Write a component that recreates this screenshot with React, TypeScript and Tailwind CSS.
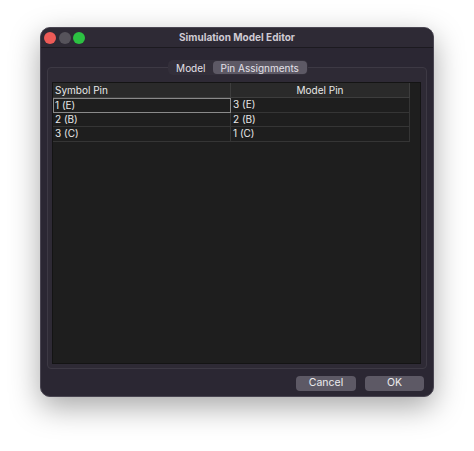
import { useState } from "react";

export default function App() {
  const rows = [
    { symbol: "1 (E)", model: "3 (E)" },
    { symbol: "2 (B)", model: "2 (B)" },
    { symbol: "3 (C)", model: "1 (C)" },
  ];

  const [tab, setTab] = useState("pins");

  return (
    <div
      className="w-[474px] h-[451px] bg-white pl-[40px] pt-[27px]"
      style={{ fontFamily: "Inter, 'Liberation Sans', sans-serif" }}
    >
      <div className="w-[394px] h-[370px] rounded-[10px] bg-[#2b2733] border border-[#4a4652] shadow-[0_10px_30px_rgba(0,0,0,0.35)] flex flex-col overflow-hidden">
        {/* title bar */}
        <div className="h-[20px] shrink-0 relative flex items-center justify-center border-b border-[#1c1a20] bg-[#2e2a35]">
          <div className="absolute left-[3px] top-[4px] flex gap-[2.5px]">
            <span className="w-[12px] h-[12px] rounded-full bg-[#ed5b57]" />
            <span className="w-[12px] h-[12px] rounded-full bg-[#56535b]" />
            <span className="w-[12px] h-[12px] rounded-full bg-[#2cc142]" />
          </div>
          <span className="text-[10px] font-bold text-[#cfcbd3]">Simulation Model Editor</span>
        </div>

        <div className="flex-1 flex flex-col px-[6px] pt-[12px]">
          {/* segmented control */}
          <div className="relative z-10 flex justify-center pl-[2px]">
            <div className="h-[15px] flex items-center rounded-[5px] bg-[#332f3a] px-[1px] text-[10px] text-[#e4e1e8]">
              <button
                onClick={() => setTab("model")}
                className={
                  tab === "model"
                    ? "h-[13px] px-[7px] rounded-[4px] bg-[#5d5965] leading-none"
                    : "h-[13px] px-[7px] rounded-[4px] leading-none"
                }
              >
                Model
              </button>
              <button
                onClick={() => setTab("pins")}
                className={
                  tab === "pins"
                    ? "h-[13px] px-[8px] rounded-[4px] bg-[#5d5965] leading-none"
                    : "h-[13px] px-[8px] rounded-[4px] leading-none"
                }
              >
                Pin Assignments
              </button>
            </div>
          </div>

          {/* tab box */}
          <div className="-mt-[8px] h-[302px] rounded-[4px] border border-[#3d3944] bg-[#2e2a35] pt-[14px] pl-[4px] pr-[5px] pb-[4px] flex flex-col">
            <div className="flex-1 bg-[#1e1e1e] border border-[#141414] text-[10px] text-[#e8e8e8]">
              <div className="flex h-[15px] bg-[#2a2a2a]">
                <div className="w-[178px] border-r border-b border-[#3d3d3d] pl-[2px] flex items-center">Symbol Pin</div>
                <div className="w-[179px] border-r border-b border-[#3d3d3d] flex items-center justify-center">Model Pin</div>
                <div className="flex-1 bg-[#1e1e1e]" />
              </div>
              {rows.map((r, idx) => (
                <div key={r.symbol + idx} className="flex h-[14.5px]">
                  <div
                    className={
                      idx === 0
                        ? "w-[178px] border border-[#8a8a8a] pl-[1px] flex items-center"
                        : "w-[178px] border-r border-b border-[#353535] pl-[2px] flex items-center"
                    }
                  >
                    {r.symbol}
                  </div>
                  <div className="w-[179px] border-r border-b border-[#353535] pl-[2px] flex items-center">
                    {r.model}
                  </div>
                </div>
              ))}
            </div>
          </div>

          {/* buttons */}
          <div className="flex justify-end gap-[9px] pt-[7px] pr-[3px]">
            <button className="w-[60px] h-[15px] rounded-[4px] bg-[#5d5965] text-[10.5px] text-[#ecebee] leading-none">
              Cancel
            </button>
            <button className="w-[59px] h-[15px] rounded-[4px] bg-[#5d5965] text-[10.5px] text-[#ecebee] leading-none">
              OK
            </button>
          </div>
        </div>
      </div>
    </div>
  );
}
